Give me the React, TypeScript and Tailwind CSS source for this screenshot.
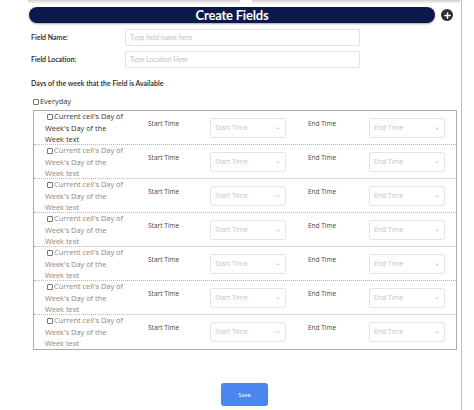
import { Plus } from 'lucide-react';

const days = [0, 1, 2, 3, 4, 5, 6];

function Box() {
  return <span className="inline-block w-[6px] h-[6px] border border-[#777] rounded-[1px] mr-[1px] align-[-0.5px] bg-white" />;
}

function Select({ label }: { label: string }) {
  return (
    <div className="w-[76px] h-[20px] mt-[7px] border border-[#e3e3e3] rounded-[3px] flex items-center justify-between pl-[4px] pr-[5px] shadow-[0_0_1px_rgba(0,0,0,0.05)]">
      <span className="text-[6.8px] text-[#c4c4c4]">{label}</span>
      <svg width="4" height="3" viewBox="0 0 4 3" className="text-[#b5b5b5]">
        <path d="M0.5 0.5 L2 2.2 L3.5 0.5" fill="none" stroke="currentColor" strokeWidth="0.7" />
      </svg>
    </div>
  );
}

export default function App() {
  return (
    <div className="w-[474px] h-[410px] bg-white overflow-hidden flex font-['Lato',sans-serif]">
      <div className="w-[462px] border-r border-[#93cfdb] flex flex-col">
        {/* top shadow of cards above */}
        <div className="flex h-[4px] pl-[28px] gap-[12px]">
          <div className="w-[212px] bg-gradient-to-b from-[#cfcfcf] to-white" />
          <div className="w-[208px] bg-gradient-to-b from-[#cfcfcf] to-white" />
        </div>

        {/* header */}
        <div className="mt-[3px] flex items-center pl-[29px]">
          <div className="w-[406px] h-[16px] rounded-full bg-[#0b1a4a] shadow-[0_1px_2px_rgba(0,0,0,0.35)] flex items-center justify-center">
            <span className="text-white font-bold text-[13px] tracking-[-0.2px] leading-none">Create Fields</span>
          </div>
          <div className="ml-[6px] w-[12px] h-[12px] rounded-full bg-[#2e2e2e] flex items-center justify-center">
            <Plus className="w-[9px] h-[9px] text-white" strokeWidth={4} />
          </div>
        </div>

        {/* inputs */}
        <div className="mt-[6px] flex items-center pl-[31px]">
          <span className="w-[94px] text-[7px] font-semibold text-[#222]">Field Name:</span>
          <div className="w-[235px] h-[17px] border border-[#e2e2e2] rounded-[2px] flex items-center pl-[4px]">
            <span className="text-[6.8px] text-[#c2c2c2]">Type field name here</span>
          </div>
        </div>
        <div className="mt-[5px] flex items-center pl-[31px]">
          <span className="w-[94px] text-[7px] font-semibold text-[#222]">Field Location:</span>
          <div className="w-[235px] h-[17px] border border-[#e2e2e2] rounded-[2px] flex items-center pl-[4px]">
            <span className="text-[6.8px] text-[#c2c2c2]">Type Location Here</span>
          </div>
        </div>

        <div className="mt-[10px] pl-[31px] h-[10px] leading-[10px] text-[7px] font-semibold text-[#222]">
          Days of the week that the Field is Available
        </div>

        <div className="mt-[7px] pl-[33px] h-[12px] leading-[12px] text-[7.4px] text-[#333] font-['Open_Sans',sans-serif]">
          <Box />Everyday
        </div>

        {/* days table */}
        <div className="mt-[3px] ml-[33px] w-[424px] border border-[#adadad] font-['Open_Sans',sans-serif]">
          {days.map((d) => (
            <div
              key={d}
              className={`h-[34px] flex items-start ${d < 6 ? 'border-b border-dotted border-[#b8b8b8]' : ''}`}
            >
              <div
                className={`w-[114px] pl-[11px] text-[7.4px] leading-[11.5px] ${d === 0 ? 'text-[#333]' : 'text-[#888]'}`}
              >
                <span className="ml-[2px]"><Box /></span>Current cell's Day of<br />Week's Day of the<br />Week text
              </div>
              <div className="w-[62px] pt-[8px] text-[6.5px] leading-[10px] text-[#444]">Start Time</div>
              <Select label="Start Time" />
              <div className="ml-[22px] w-[61px] pt-[8px] text-[6.5px] leading-[10px] text-[#444]">End Time</div>
              <Select label="End Time" />
            </div>
          ))}
        </div>

        <div className="mt-[33px] ml-[221px]">
          <button className="w-[47px] h-[23px] rounded-[3px] bg-[#4a86ee] text-white text-[6px] flex items-center justify-center shadow-[0_0_6px_rgba(0,0,0,0.06)]">
            Save
          </button>
        </div>
      </div>
    </div>
  );
}
